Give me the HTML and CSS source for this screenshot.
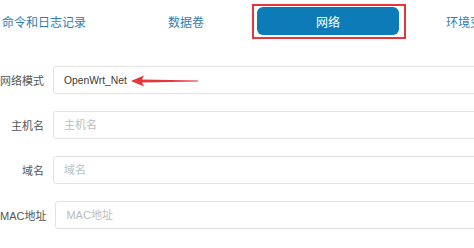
FILE: index.html
```html
<!DOCTYPE html>
<html lang="zh-CN">
<head>
<meta charset="utf-8">
<link rel="stylesheet" href="styles.css">
</head>
<body>
<div class="page">
  <nav class="tabs">
    <div class="tab">命令和日志记录</div>
    <div class="tab">数据卷</div>
    <div class="tab active">网络<span class="highlight"></span></div>
    <div class="tab">环境变量</div>
  </nav>
  <form class="form">
    <div class="row">
      <label class="label">网络模式</label>
      <div class="field">
        <input class="input input-filled" value="OpenWrt_Net">
        <svg class="arrow" width="68" height="12" viewBox="0 0 68 12"><polygon points="0,6 13,0.5 11,4.4 67,5.6 67,6.4 11,7.6 13,11.5" fill="#e8353b"/></svg>
      </div>
    </div>
    <div class="row">
      <label class="label">主机名</label>
      <div class="field"><input class="input" placeholder="主机名"></div>
    </div>
    <div class="row">
      <label class="label">域名</label>
      <div class="field"><input class="input" placeholder="域名"></div>
    </div>
    <div class="row">
      <label class="label">MAC地址</label>
      <div class="field"><input class="input" placeholder="MAC地址"></div>
    </div>
  </form>
</div>
</body>
</html>
```
FILE: styles.css
```css
html, body {
  margin: 0;
  padding: 0;
  background: #ffffff;
}
body {
  width: 474px;
  height: 248px;
  overflow: hidden;
  font-family: "Liberation Sans", "Noto Sans CJK SC", sans-serif;
}
.page {
  width: 474px;
}
.tabs {
  display: flex;
  margin-left: -27px;
  padding-top: 7px;
}
.tab {
  flex: 0 0 142px;
  height: 28px;
  display: flex;
  align-items: center;
  justify-content: center;
  white-space: nowrap;
  font-size: 12px;
  color: #2f7db3;
}
.tab.active {
  position: relative;
  background: #0d7bb7;
  color: #ffffff;
  border-radius: 6px;
}
.highlight {
  position: absolute;
  left: -5px;
  top: -3px;
  right: -7px;
  bottom: -4px;
  border: 2px solid #e8343a;
}
.form {
  margin: 0;
  padding-top: 31px;
}
.row {
  display: flex;
  align-items: center;
  height: 28px;
  margin-bottom: 17px;
}
.label {
  flex: 0 0 44px;
  display: flex;
  justify-content: flex-end;
  white-space: nowrap;
  margin-right: 9px;
  font-size: 11px;
  color: #555555;
}
.field {
  position: relative;
  flex: 0 0 460px;
  height: 28px;
}
.input {
  box-sizing: border-box;
  width: 100%;
  height: 28px;
  margin: 0;
  padding: 0 0 0 10px;
  border: 1px solid #e3e3e3;
  border-radius: 3px;
  outline: none;
  font-family: "Liberation Sans", "Noto Sans CJK SC", sans-serif;
  font-size: 11px;
  color: #333333;
  background: #ffffff;
}
.input-filled {
  font-size: 10.3px;
  color: #3a3a3a;
}
.input::placeholder {
  color: #bcbcbc;
}
.arrow {
  position: absolute;
  left: 78px;
  top: 9px;
}
```
